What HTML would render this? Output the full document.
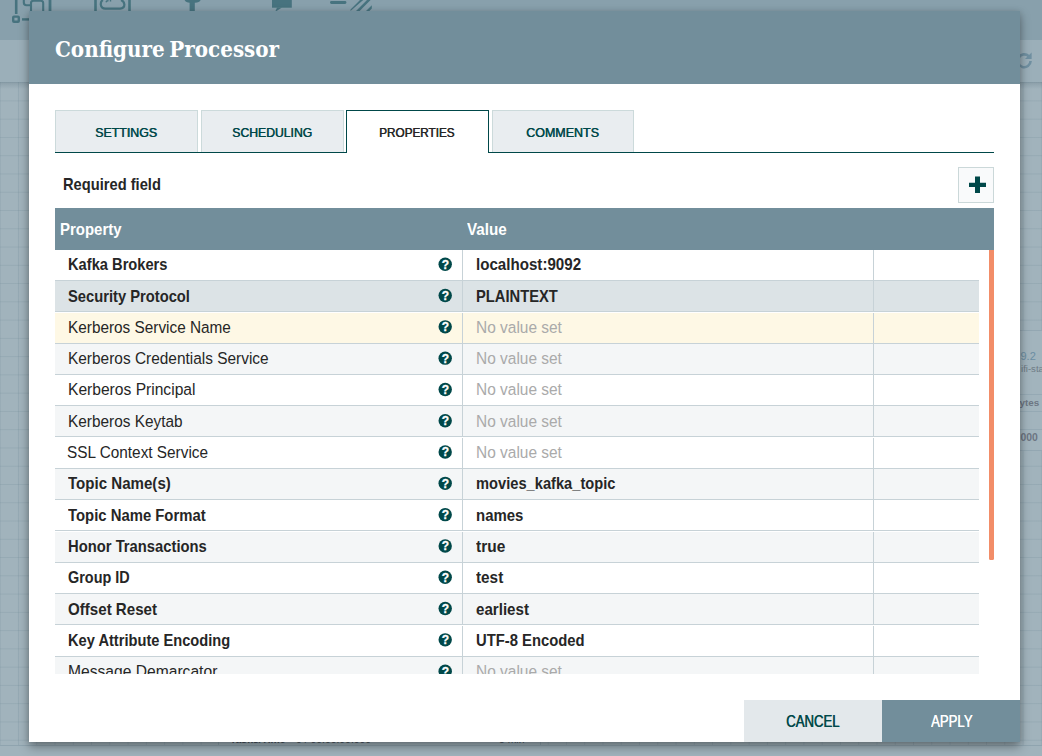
<!DOCTYPE html>
<html><head><meta charset="utf-8"><title>NiFi Flow</title>
<style>
html,body{margin:0;padding:0;}
body{width:1042px;height:756px;overflow:hidden;position:relative;background:#a0b2bb;font-family:"Liberation Sans",Arial,sans-serif;font-size:16.9px;color:#262626;}
div,span,svg,i{position:absolute;}
#canvas{left:0;top:0;width:1042px;height:756px;background-color:#a1b3bc;
 background-image:linear-gradient(to right,rgba(120,145,158,.28) 1px,transparent 1px),linear-gradient(to bottom,rgba(120,145,158,.28) 1px,transparent 1px);
 background-size:18.28px 18.28px;background-position:-0.28px 9.1px;}
#toolbar{left:0;top:0;width:1042px;height:40px;background:#88a0ac;}
#status{left:0;top:40px;width:1042px;height:42px;background:#9bafb9;}
#sshadow{left:0;top:82px;width:1042px;height:7px;background:linear-gradient(to bottom,rgba(60,85,100,.22),rgba(60,85,100,0));}
#proc{left:1016px;top:330px;width:40px;height:119px;background:#a2b4bd;border:1px solid #93a7b2;}
#proc i{left:0;width:40px;height:1px;background:#95a9b4;}
.pt{white-space:nowrap;line-height:14px;}
#proc2{left:218px;top:700px;width:321px;height:45px;background:#a2b4bd;border-left:1px solid #8fa4af;border-right:1px solid #8fa4af;}
#botband{left:0;top:745px;width:1042px;height:11px;background:#a1b3bc;border-top:1px solid #8fa4af;}
#shadow{left:29px;top:11px;width:991px;height:731px;box-shadow:0 5px 10px rgba(0,0,0,.34),0 1px 6px rgba(0,0,0,.14);}
#page{left:0;top:0;width:1042px;height:756px;}
#dlg{left:29px;top:11px;width:991px;height:731px;background:#fff;}
#dhead{left:29px;top:11px;width:991px;height:73px;background:#728e9b;}
.tab{top:110px;height:41px;width:141px;border:1px solid #ccdadb;border-bottom:0;background:#e9edf0;}
.tab.selt{background:#fff;border-color:#004849;height:42px;}
#tabline{left:55px;top:152px;width:939px;height:1px;background:#004849;}
#plus{left:958px;top:167px;width:34px;height:34px;border:1px solid #cbd8d9;background:#f9fafb;}
#thead{left:55px;top:208px;width:939px;height:42px;background:#728e9b;}
#tbody{left:55px;top:250px;width:939px;height:424px;overflow:hidden;}
#tbody > *{margin-left:-55px;margin-top:-250px;}
.row{left:55px;width:924px;height:31px;box-sizing:border-box;border-bottom:1px solid #c7d2d7;background:#fff;}
.row i{top:0;width:1px;height:30px;background:#c7d2d7;}
.row.even{background:#f4f6f7;}
.row.sel{background:#dce3e6;}
.row.hov{background:#fef8e5;}
.qs text{font:bold 12px 'Liberation Sans',sans-serif;fill:#fff;stroke:#fff;stroke-width:.3px;text-anchor:middle;}
.sep{top:250px;width:1px;height:424px;background:#c7d2d7;}
#thumb{left:989px;top:250px;width:5px;height:310px;background:#f28d68;border-radius:0 0 1.5px 1.5px;}
.btn{top:700px;height:42px;width:138px;}
#cancel{left:744px;background:#e3e8eb;}
#apply{left:882px;background:#728e9b;}
.t{white-space:nowrap;line-height:30px;transform-origin:0 0;}
.f-r{font:16.9px 'Liberation Sans',Arial,sans-serif;}
.f-b{font:bold 16.9px 'Liberation Sans',Arial,sans-serif;}
.f-tab{font:13px 'Liberation Sans',Arial,sans-serif;text-shadow:0.55px 0 0 currentColor;}
.f-btn{font:15.6px 'Liberation Sans',Arial,sans-serif;text-shadow:0.6px 0 0 currentColor;}
.f-btnr{font:15.6px 'Liberation Sans',Arial,sans-serif;text-shadow:0.3px 0 0 currentColor;}
.f-title{font:bold 23.1px 'DejaVu Serif Condensed','DejaVu Serif',serif;word-spacing:-2.4px;}
</style></head><body>
<div id="canvas"></div>
<div id="toolbar"></div>
<div id="status"></div>
<svg id="bgsvg" style="left:0;top:0" width="1042" height="756" viewBox="0 0 1042 756">
 <g fill="none" stroke="#47737f" stroke-width="2.2" stroke-linecap="butt">
  <path d="M16.2 0V14" stroke-width="2.6"/>
  <rect x="13.2" y="16.6" width="5.6" height="5.2" rx="0.8" stroke-width="2.4"/>
  <path d="M22 19.4H30" stroke-width="2.4"/>
  <path d="M23.8 0V2.5Q23.8 5.2 26.5 5.2H31" stroke-width="2.1"/>
  <path d="M31 14V3Q31 0.8 33.6 0.8H40.6Q43.2 0.8 43.2 3V14" stroke-width="2.1"/>
  <path d="M50 0V12" stroke-width="2.8"/>
  <path d="M95.5 0V12" stroke-width="2.6"/>
  <path d="M129.5 0V12" stroke-width="2.6"/>
  <path d="M103 0Q100.6 1 100.8 4.6Q101.3 8.6 105.5 8.6H120Q124.4 8.4 124.4 4.6Q124.2 1.2 121 0" stroke-width="2.2"/>
  <path d="M106 2.2Q106.5 0.5 108.5 0.8M110.5 0V1.6" stroke-width="1.4"/>
 </g>
 <g fill="#47737f">
  <path d="M184.6 0H200.6Q199.5 2.8 195 2.8H190Q185.8 2.8 184.6 0Z"/>
  <rect x="189.6" y="2" width="5.2" height="9"/>
  <rect x="272" y="0" width="19.8" height="7.7"/>
  <path d="M277 7.5H282L276.5 11H275.5Z"/>
  <rect x="330" y="1" width="16.4" height="2.9" rx="1.4"/>
  <path d="M350.5 9.5L360 0H363.2L350.5 11Z M356 11L367 0H370.6L359.6 11Z M366 11L371.8 5.2V8.5L369.4 11Z"/>
 </g>
 <g fill="none" stroke="#7090a1" stroke-width="2.6"><path d="M1030.6 61A6.4 6.4 0 1 1 1028.7 56.2"/></g>
 <path d="M1031.6 52.4V59H1025Z" fill="#7090a1"/>
</svg>
<div id="sshadow"></div>
<div id="proc"><i style="top:63px"></i><i style="top:80px"></i><i style="top:98px"></i></div>
<span class="pt" style="left:1020.5px;top:349px;font-size:11px;color:#6b8ea3">9.2</span>
<span class="pt" style="left:1021px;top:362px;font-size:9.6px;color:#6f7c86">ifi-status</span>
<span class="pt" style="left:1019.5px;top:396px;font-size:9.9px;font-weight:bold;color:#6d7683">ytes</span>
<span class="pt" style="left:1020.5px;top:430.5px;font-size:10.4px;font-weight:bold;color:#6d7683">000</span>
<div id="proc2"></div>
<span class="pt" style="left:230px;top:732.5px;font-size:10.4px;font-weight:bold;color:#4a5461">Tasks/Time</span>
<span class="pt" style="left:296px;top:732.5px;font-size:10.4px;color:#4a5461">0 / 00:00:00.000</span>
<span class="pt" style="left:499px;top:732.5px;font-size:10.4px;color:#4a5461">5 min</span>
<div id="botband"></div>
<div id="shadow"></div>
<div id="page">
 <div id="dlg"></div>
 <div id="dhead"></div>
 <div class="tab" style="left:55px"></div>
 <div class="tab" style="left:201px"></div>
 <div id="tabline"></div>
 <div class="tab selt" style="left:346px"></div>
 <div class="tab" style="left:492px;width:140px"></div>
 <div id="plus"><svg style="left:0;top:0" width="34" height="34" viewBox="0 0 34 34"><path d="M10 14.7h17v4.4h-17z M16 8.5h5v16.4h-5z" fill="#004849"/></svg></div>
 <div id="thead"></div>
 <div id="tbody">
<div class="row " style="top:250px"><i style="left:407px"></i><i style="left:818px"></i></div>
<div class="row sel" style="top:281px"><i style="left:407px"></i><i style="left:818px"></i></div>
<div class="row hov" style="top:313px"><i style="left:407px"></i><i style="left:818px"></i></div>
<div class="row even" style="top:344px"><i style="left:407px"></i><i style="left:818px"></i></div>
<div class="row " style="top:375px"><i style="left:407px"></i><i style="left:818px"></i></div>
<div class="row even" style="top:406px"><i style="left:407px"></i><i style="left:818px"></i></div>
<div class="row " style="top:438px"><i style="left:407px"></i><i style="left:818px"></i></div>
<div class="row even" style="top:469px"><i style="left:407px"></i><i style="left:818px"></i></div>
<div class="row " style="top:500px"><i style="left:407px"></i><i style="left:818px"></i></div>
<div class="row even" style="top:532px"><i style="left:407px"></i><i style="left:818px"></i></div>
<div class="row " style="top:563px"><i style="left:407px"></i><i style="left:818px"></i></div>
<div class="row even" style="top:594px"><i style="left:407px"></i><i style="left:818px"></i></div>
<div class="row " style="top:626px"><i style="left:407px"></i><i style="left:818px"></i></div>
<div class="row even" style="top:657px"><i style="left:407px"></i><i style="left:818px"></i></div>
<svg style="left:55px;top:250px" width="939" height="424" viewBox="0 0 939 424" fill="#004849" class="qs"><circle cx="390.20" cy="14.25" r="6.7"/><text x="390.40" y="18.65">?</text><circle cx="390.20" cy="45.55" r="6.7"/><text x="390.40" y="49.95">?</text><circle cx="390.20" cy="76.85" r="6.7"/><text x="390.40" y="81.25">?</text><circle cx="390.20" cy="108.15" r="6.7"/><text x="390.40" y="112.55">?</text><circle cx="390.20" cy="139.45" r="6.7"/><text x="390.40" y="143.85">?</text><circle cx="390.20" cy="170.75" r="6.7"/><text x="390.40" y="175.15">?</text><circle cx="390.20" cy="202.05" r="6.7"/><text x="390.40" y="206.45">?</text><circle cx="390.20" cy="233.35" r="6.7"/><text x="390.40" y="237.75">?</text><circle cx="390.20" cy="264.65" r="6.7"/><text x="390.40" y="269.05">?</text><circle cx="390.20" cy="295.95" r="6.7"/><text x="390.40" y="300.35">?</text><circle cx="390.20" cy="327.25" r="6.7"/><text x="390.40" y="331.65">?</text><circle cx="390.20" cy="358.55" r="6.7"/><text x="390.40" y="362.95">?</text><circle cx="390.20" cy="389.85" r="6.7"/><text x="390.40" y="394.25">?</text><circle cx="390.20" cy="421.15" r="6.7"/><text x="390.40" y="425.55">?</text></svg>
<span class="t f-b" style="left:68.03px;top:255px;color:#262626;transform:scaleX(0.8686)">Kafka Brokers</span>
<span class="t f-b" style="left:68.03px;top:287px;color:#262626;transform:scaleX(0.8717)">Security Protocol</span>
<span class="t f-r" style="left:67.99px;top:318px;color:#262626;transform:scaleX(0.9084)">Kerberos Service Name</span>
<span class="t f-r" style="left:67.99px;top:349px;color:#262626;transform:scaleX(0.9133)">Kerberos Credentials Service</span>
<span class="t f-r" style="left:67.98px;top:380px;color:#262626;transform:scaleX(0.9235)">Kerberos Principal</span>
<span class="t f-r" style="left:67.99px;top:412px;color:#262626;transform:scaleX(0.9105)">Kerberos Keytab</span>
<span class="t f-r" style="left:67.49px;top:443px;color:#262626;transform:scaleX(0.9085)">SSL Context Service</span>
<span class="t f-b" style="left:68.40px;top:474px;color:#262626;transform:scaleX(0.8930)">Topic Name(s)</span>
<span class="t f-b" style="left:68.40px;top:506px;color:#262626;transform:scaleX(0.8801)">Topic Name Format</span>
<span class="t f-b" style="left:68.02px;top:537px;color:#262626;transform:scaleX(0.8752)">Honor Transactions</span>
<span class="t f-b" style="left:67.55px;top:568px;color:#262626;transform:scaleX(0.8535)">Group ID</span>
<span class="t f-b" style="left:67.51px;top:600px;color:#262626;transform:scaleX(0.8949)">Offset Reset</span>
<span class="t f-b" style="left:68.03px;top:631px;color:#262626;transform:scaleX(0.8670)">Key Attribute Encoding</span>
<span class="t f-r" style="left:67.98px;top:662px;color:#262626;transform:scaleX(0.9250)">Message Demarcator</span>
<span class="t f-b" style="left:476.00px;top:255px;color:#262626;transform:scaleX(0.8957)">localhost:9092</span>
<span class="t f-b" style="left:476.03px;top:287px;color:#262626;transform:scaleX(0.8720)">PLAINTEXT</span>
<span class="t f-r" style="left:475.98px;top:318px;color:#aaaaaa;transform:scaleX(0.9151)">No value set</span>
<span class="t f-r" style="left:475.98px;top:349px;color:#aaaaaa;transform:scaleX(0.9151)">No value set</span>
<span class="t f-r" style="left:475.98px;top:380px;color:#aaaaaa;transform:scaleX(0.9151)">No value set</span>
<span class="t f-r" style="left:475.98px;top:412px;color:#aaaaaa;transform:scaleX(0.9151)">No value set</span>
<span class="t f-r" style="left:475.98px;top:443px;color:#aaaaaa;transform:scaleX(0.9151)">No value set</span>
<span class="t f-b" style="left:476.03px;top:474px;color:#262626;transform:scaleX(0.8686)">movies_kafka_topic</span>
<span class="t f-b" style="left:476.02px;top:506px;color:#262626;transform:scaleX(0.8846)">names</span>
<span class="t f-b" style="left:475.90px;top:537px;color:#262626;transform:scaleX(0.9161)">true</span>
<span class="t f-b" style="left:475.90px;top:568px;color:#262626;transform:scaleX(0.9067)">test</span>
<span class="t f-b" style="left:476.01px;top:600px;color:#262626;transform:scaleX(0.8948)">earliest</span>
<span class="t f-b" style="left:476.02px;top:631px;color:#262626;transform:scaleX(0.8770)">UTF-8 Encoded</span>
<span class="t f-r" style="left:475.98px;top:662px;color:#aaaaaa;transform:scaleX(0.9151)">No value set</span>
 </div>
 <div id="thumb"></div>
 <div class="btn" id="cancel"></div>
 <div class="btn" id="apply"></div>
<span class="t f-title" style="left:54.84px;top:35px;color:#fff;transform:scaleX(0.9588)">Configure Processor</span>
<span class="t f-b" style="left:62.83px;top:175px;color:#262626;transform:scaleX(0.8694)">Required field</span>
<span class="t f-b" style="left:60.11px;top:220px;color:#fff;transform:scaleX(0.8853)">Property</span>
<span class="t f-b" style="left:467.40px;top:220px;color:#fff;transform:scaleX(0.9000)">Value</span>
<span class="t f-tab" style="left:95.35px;top:125px;color:#004849;transform:scaleX(0.9516)">SETTINGS</span>
<span class="t f-tab" style="left:231.66px;top:125px;color:#004849;transform:scaleX(0.9381)">SCHEDULING</span>
<span class="t f-tab" style="left:379.40px;top:125px;color:#262626;transform:scaleX(0.9024)">PROPERTIES</span>
<span class="t f-tab" style="left:526.24px;top:125px;color:#004849;transform:scaleX(0.9587)">COMMENTS</span>
<span class="t f-btn" style="left:785.66px;top:713px;color:#004849;transform:scaleX(0.8444)">CANCEL</span>
<span class="t f-btnr" style="left:930.50px;top:713px;color:#fff;transform:scaleX(0.8449)">APPLY</span>
</div>
</body></html>
